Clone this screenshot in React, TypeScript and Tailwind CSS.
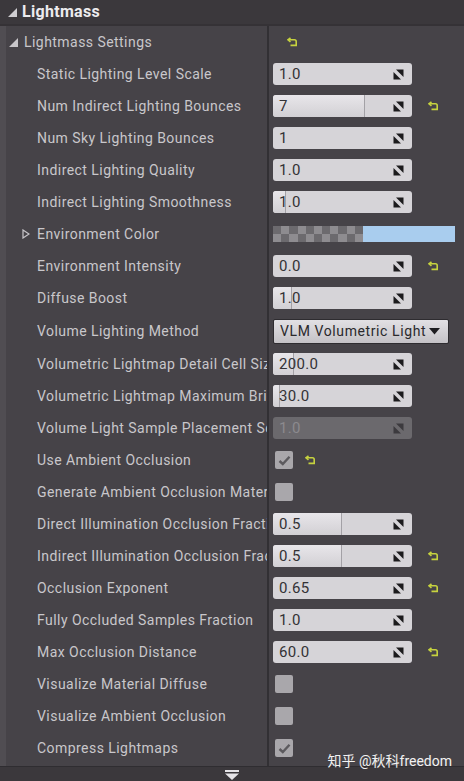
import React from "react";

type Row =
  | { label: string; kind: "num"; value: string; fill?: number; reset?: boolean; disabled?: boolean }
  | { label: string; kind: "check"; checked: boolean; reset?: boolean }
  | { label: string; kind: "color" }
  | { label: string; kind: "select"; value: string };

const rows: Row[] = [
  { label: "Static Lighting Level Scale", kind: "num", value: "1.0" },
  { label: "Num Indirect Lighting Bounces", kind: "num", value: "7", fill: 92, reset: true },
  { label: "Num Sky Lighting Bounces", kind: "num", value: "1" },
  { label: "Indirect Lighting Quality", kind: "num", value: "1.0" },
  { label: "Indirect Lighting Smoothness", kind: "num", value: "1.0", fill: 13 },
  { label: "Environment Color", kind: "color" },
  { label: "Environment Intensity", kind: "num", value: "0.0", reset: true },
  { label: "Diffuse Boost", kind: "num", value: "1.0", fill: 19 },
  { label: "Volume Lighting Method", kind: "select", value: "VLM Volumetric Light" },
  { label: "Volumetric Lightmap Detail Cell Size", kind: "num", value: "200.0", fill: 21 },
  { label: "Volumetric Lightmap Maximum Brick Memory Mb", kind: "num", value: "30.0", fill: 7 },
  { label: "Volume Light Sample Placement Scale", kind: "num", value: "1.0", disabled: true },
  { label: "Use Ambient Occlusion", kind: "check", checked: true, reset: true },
  { label: "Generate Ambient Occlusion Material Mask", kind: "check", checked: false },
  { label: "Direct Illumination Occlusion Fraction", kind: "num", value: "0.5", fill: 69 },
  { label: "Indirect Illumination Occlusion Fraction", kind: "num", value: "0.5", fill: 69, reset: true },
  { label: "Occlusion Exponent", kind: "num", value: "0.65", reset: true },
  { label: "Fully Occluded Samples Fraction", kind: "num", value: "1.0" },
  { label: "Max Occlusion Distance", kind: "num", value: "60.0", reset: true },
  { label: "Visualize Material Diffuse", kind: "check", checked: false },
  { label: "Visualize Ambient Occlusion", kind: "check", checked: false },
  { label: "Compress Lightmaps", kind: "check", checked: true },
];

function ResetIcon() {
  return (
    <svg width="11" height="10" viewBox="0 0 11 10" className="shrink-0">
      <path d="M3.5 0.8 L1 2.8 L3.5 4.8" fill="none" stroke="#c6d23f" strokeWidth="1.6" />
      <path d="M1.2 2.8 H7.5 Q9.2 2.8 9.2 4.6 V8.4 H3.5" fill="none" stroke="#c6d23f" strokeWidth="1.6" />
    </svg>
  );
}

function SpinIcon({ dim }: { dim?: boolean }) {
  const c = dim ? "#3c3a3e" : "#1c1b1d";
  return (
    <svg width="11" height="11" viewBox="0 0 11 11" className="shrink-0">
      <polygon points="3,0.5 10.5,0.5 10.5,8" fill={c} />
      <polygon points="0.5,3 0.5,10.5 8,10.5" fill={c} />
    </svg>
  );
}

function NumBox({ value, fill, disabled }: { value: string; fill?: number; disabled?: boolean }) {
  return (
    <div
      className={`relative flex h-[22px] w-[139px] items-center overflow-hidden rounded-[3px] pl-[6px] pr-[8px] ${
        disabled ? "bg-[#6b696d] text-[#8c8a8e]" : "bg-[#d6d4d8] text-[#333235]"
      }`}
    >
      {fill ? (
        <div
          className="absolute inset-y-0 left-0 border-r border-[#a3a1a6] bg-gradient-to-b from-[#e8e6ea] to-[#d2d0d4]"
          style={{ width: fill }}
        />
      ) : null}
      <span className="relative flex-1 text-[15px] leading-none tracking-[0.3px]">{value}</span>
      <span className="relative">
        <SpinIcon dim={disabled} />
      </span>
    </div>
  );
}

function CheckBox({ checked }: { checked: boolean }) {
  return (
    <div className="flex h-[18px] w-[18px] items-center justify-center rounded-[2px] bg-[#a9a7ab]">
      {checked ? (
        <svg width="13" height="11" viewBox="0 0 13 11">
          <path d="M1.5 6 L4.8 9 L11.5 1.8" fill="none" stroke="#5c5a5e" strokeWidth="2.4" />
        </svg>
      ) : null}
    </div>
  );
}

function ColorSwatch() {
  const cells = [];
  for (let r = 0; r < 2; r++) {
    for (let c = 0; c < 11; c++) {
      cells.push(
        <div key={`${r}-${c}`} className={(r + c) % 2 === 0 ? "bg-[#6c6a6e]" : "bg-[#8e8c90]"} />
      );
    }
  }
  return (
    <div className="flex h-[16px] w-[182px]">
      <div className="grid h-full w-[90px] grid-cols-11 grid-rows-2">{cells}</div>
      <div className="h-full flex-1 bg-[#a9cdee]" />
    </div>
  );
}

function Value({ row }: { row: Row }) {
  if (row.kind === "num") {
    return (
      <div className="flex items-center gap-[16px]">
        <NumBox value={row.value} fill={row.fill} disabled={row.disabled} />
        {row.reset ? <ResetIcon /> : null}
      </div>
    );
  }
  if (row.kind === "check") {
    return (
      <div className="flex items-center gap-[12px] pl-[2px]">
        <CheckBox checked={row.checked} />
        {row.reset ? <ResetIcon /> : null}
      </div>
    );
  }
  if (row.kind === "color") return <ColorSwatch />;
  return (
    <div className="flex h-[25px] w-[176px] items-center gap-[3px] rounded-[2px] border border-[#2e2c30] bg-gradient-to-b from-[#e2e0e4] to-[#c4c2c6] pl-[6px] text-[14px] tracking-[0.6px] text-[#2a292c]">
      <span className="whitespace-nowrap">{row.value}</span>
      <svg width="11" height="7" viewBox="0 0 11 7" className="shrink-0">
        <polygon points="0,0 11,0 5.5,6.5" fill="#1e1d20" />
      </svg>
    </div>
  );
}

export default function App() {
  return (
    <div
      className="flex h-[781px] w-[464px] flex-col overflow-hidden bg-[#464348] text-[#c9c7cb]"
      style={{ fontFamily: "Roboto, 'Noto Sans', 'Noto Sans CJK SC', sans-serif" }}
    >
      <div className="flex h-[26px] shrink-0 items-center gap-[5px] border-b-2 border-[#353236] bg-[#3b383c] pl-[8px]">
        <svg width="9" height="9" viewBox="0 0 9 9">
          <polygon points="9,0 9,9 0,9" fill="#d0ced2" />
        </svg>
        <span className="text-[16px] font-bold tracking-[0.3px] text-[#ecebee]">Lightmass</span>
      </div>
      <div className="flex flex-1 border-l-[6px] border-[#504d52]">
        <div className="flex flex-1 flex-col">
          <div className="flex h-[32px] items-center">
            <div className="flex w-[261px] items-center gap-[6px] pl-[3px]">
              <svg width="9" height="9" viewBox="0 0 9 9">
                <polygon points="9,0 9,9 0,9" fill="#c8c6ca" />
              </svg>
              <span className="text-[14px] tracking-[0.45px]">Lightmass Settings</span>
            </div>
            <div className="h-full w-[2px] bg-[#323034]" />
            <div className="pl-[18px]">
              <ResetIcon />
            </div>
          </div>
          {rows.map((row) => (
            <div key={row.label} className={`flex items-center ${row.kind === "select" ? "h-[34px]" : "h-[32px]"}`}>
              <div className="flex w-[261px] items-center overflow-hidden whitespace-nowrap pl-[31px]">
                {row.kind === "color" ? (
                  <svg width="8" height="10" viewBox="0 0 8 10" className="-ml-[15px] mr-[7px] shrink-0">
                    <polygon points="1,1 7,5 1,9" fill="none" stroke="#c8c6ca" strokeWidth="1.2" />
                  </svg>
                ) : null}
                <span className="text-[14px] tracking-[0.45px]">{row.label}</span>
              </div>
              <div className="h-full w-[2px] bg-[#323034]" />
              <div className="flex flex-1 items-center pl-[4px]">
                <Value row={row} />
              </div>
            </div>
          ))}
          <div className="flex flex-1">
            <div className="w-[261px]" />
            <div className="w-[2px] bg-[#323034]" />
            <div className="relative flex-1">
              <span className="absolute bottom-[-2px] right-[12px] whitespace-nowrap text-[14px] leading-none text-[#f2f2f2]">
                知乎 @秋科freedom
              </span>
            </div>
          </div>
        </div>
      </div>
      <div className="flex h-[15px] shrink-0 items-start justify-center border-t border-[#2f2d31] bg-[#3b383c] pt-[3px]">
        <svg width="14" height="10" viewBox="0 0 14 10">
          <rect x="0" y="0" width="14" height="2" fill="#e6e4e8" />
          <polygon points="0,3.5 14,3.5 7,10" fill="#e6e4e8" />
        </svg>
      </div>
    </div>
  );
}
